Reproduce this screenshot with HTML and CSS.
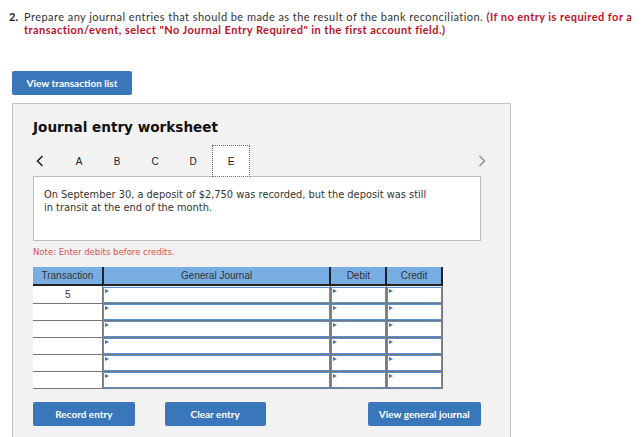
FILE: index.html
```html
<!DOCTYPE html>
<html lang="en">
  <head>
    <meta charset="UTF-8">
    <title>Journal entry worksheet</title>
    <link rel="stylesheet" href="styles.css">
  </head>
  <body>
    <div class="question">
      <span class="q-num">2.</span>
      <p class="q-text">Prepare any journal entries that should be made as the result of the bank reconciliation. <strong class="q-hint">(If no entry is required for a transaction/event, select "No Journal Entry Required" in the first account field.)</strong></p>
    </div>

    <button class="blue-btn list-btn">View transaction list</button>

    <div class="worksheet">
      <h2 class="ws-title">Journal entry worksheet</h2>

      <div class="tabs">
        <span class="tab-arrow prev">
          <svg width="8" height="12" viewBox="0 0 8 12"><polyline points="6.5,1 1.5,6 6.5,11" fill="none" stroke="#222" stroke-width="1.6"/></svg>
        </span>
        <span class="tab">A</span>
        <span class="tab">B</span>
        <span class="tab">C</span>
        <span class="tab">D</span>
        <span class="tab active">E</span>
        <span class="tab-arrow next">
          <svg width="8" height="12" viewBox="0 0 8 12"><polyline points="1.5,1 6.5,6 1.5,11" fill="none" stroke="#8a8a8a" stroke-width="1.4"/></svg>
        </span>
      </div>

      <div class="description">
        On September 30, a deposit of $2,750 was recorded, but the deposit was still<br>
        in transit at the end of the month.
      </div>

      <p class="note">Note: Enter debits before credits.</p>

      <table class="journal">
        <thead>
          <tr>
            <th class="col-trans">Transaction</th>
            <th class="col-gj">General Journal</th>
            <th class="col-amt">Debit</th>
            <th class="col-amt">Credit</th>
          </tr>
        </thead>
        <tbody>
          <tr>
            <td class="trans first">5</td>
            <td class="entry"><div class="field"></div></td>
            <td class="entry"><div class="field"></div></td>
            <td class="entry"><div class="field"></div></td>
          </tr>
          <tr>
            <td class="trans"></td>
            <td class="entry"><div class="field"></div></td>
            <td class="entry"><div class="field"></div></td>
            <td class="entry"><div class="field"></div></td>
          </tr>
          <tr>
            <td class="trans"></td>
            <td class="entry"><div class="field"></div></td>
            <td class="entry"><div class="field"></div></td>
            <td class="entry"><div class="field"></div></td>
          </tr>
          <tr>
            <td class="trans"></td>
            <td class="entry"><div class="field"></div></td>
            <td class="entry"><div class="field"></div></td>
            <td class="entry"><div class="field"></div></td>
          </tr>
          <tr>
            <td class="trans"></td>
            <td class="entry"><div class="field"></div></td>
            <td class="entry"><div class="field"></div></td>
            <td class="entry"><div class="field"></div></td>
          </tr>
          <tr>
            <td class="trans"></td>
            <td class="entry"><div class="field"></div></td>
            <td class="entry"><div class="field"></div></td>
            <td class="entry"><div class="field"></div></td>
          </tr>
        </tbody>
      </table>

      <div class="actions">
        <button class="blue-btn record-btn">Record entry</button>
        <button class="blue-btn clear-btn">Clear entry</button>
        <button class="blue-btn view-btn">View general journal</button>
      </div>
    </div>
  </body>
</html>
```

FILE: styles.css
```css
body {
  margin: 0;
  background-color: #fff;
  color: #222;
  font-family: 'Lato', sans-serif;
}

/* Question text */
.question {
  display: flex;
  padding: 11px 0 0 9px;
  font-size: 11px;
  line-height: 12.5px;
  letter-spacing: 0.45px;
}

.q-num {
  width: 15px;
  flex-shrink: 0;
  font-weight: bold;
  letter-spacing: 0;
}

.q-text {
  margin: 0;
  color: #333;
}

.q-hint {
  color: #c0102a;
}

/* Buttons */
.blue-btn {
  height: 24px;
  border: none;
  border-radius: 2px;
  background-color: #3a76ba;
  color: #fff;
  font-family: 'Lato', sans-serif;
  font-size: 10px;
  font-weight: bold;
  padding: 0;
  cursor: pointer;
}

.list-btn {
  display: block;
  width: 120px;
  margin: 35px 0 0 12px;
}

/* Worksheet panel */
.worksheet {
  width: 448px;
  margin: 8px 0 0 12px;
  padding: 14px 29px 20px 20px;
  background-color: #f2f2f2;
  border: 1px solid #c4c4c4;
}

.ws-title {
  margin: 0;
  font-family: 'DejaVu Sans', sans-serif;
  font-size: 13.6px;
  font-weight: bold;
  line-height: 19px;
  color: #111;
}

.tabs {
  display: flex;
  align-items: stretch;
  height: 32px;
  margin-top: 8px;
  margin-right: -5px;
  font-family: 'Liberation Sans', sans-serif;
  font-size: 10px;
  color: #222;
}

.tab-arrow {
  display: flex;
  align-items: center;
}

.tab-arrow.prev {
  width: 24px;
  padding-left: 3px;
}

.tab-arrow.next {
  margin-left: auto;
}

.tab {
  width: 38px;
  display: flex;
  align-items: center;
  justify-content: center;
}

.tab.active {
  box-sizing: border-box;
  background-color: #fff;
  border: 1px dotted #4a6a9a;
  position: relative;
  z-index: 1;
}

.description {
  margin-top: -1px;
  height: 41px;
  padding: 11px 10px;
  background-color: #fff;
  border: 1px solid #bdbdbd;
  font-family: 'DejaVu Sans', sans-serif;
  font-size: 9.85px;
  line-height: 13px;
  color: #333;
}

.note {
  margin: 5px 0 0 0;
  font-family: 'DejaVu Sans', sans-serif;
  font-size: 8.5px;
  line-height: 12px;
  color: #d9534f;
}

/* Journal table */
.journal {
  margin-top: 9px;
  width: 410px;
  border-collapse: collapse;
  font-family: 'Liberation Sans', sans-serif;
  font-size: 10px;
  color: #333;
}

.journal th {
  height: 17px;
  padding: 0;
  background-color: #77ade3;
  font-weight: normal;
  border-right: 2px solid #222;
  border-bottom: 2px solid #222;
}

.col-trans { width: 69px; }
.col-gj { width: 227px; }
.col-amt { width: 54px; }

.journal td {
  padding: 0;
  height: 16px;
  border-bottom: 1px solid #777;
}

.journal td.trans {
  background-color: #fff;
  text-align: center;
  vertical-align: middle;
}

.journal td.trans.first {
  height: 17px;
  line-height: 17px;
}

.journal td.entry {
  border: 1px solid #777;
  border-top: none;
}

.field {
  position: relative;
  box-sizing: border-box;
  height: 16px;
  background-color: #fff;
  border: 1px solid #5b8fd0;
}

.field::before {
  content: "";
  position: absolute;
  top: 1px;
  left: 1px;
  border-left: 4px solid #3a78c4;
  border-top: 2px solid transparent;
  border-bottom: 2px solid transparent;
}

/* Bottom actions */
.actions {
  display: flex;
  margin-top: 13px;
}

.record-btn { width: 104px; }
.clear-btn { width: 103px; margin-left: 30px; }
.view-btn { width: 116px; margin-left: 102px; }
```
